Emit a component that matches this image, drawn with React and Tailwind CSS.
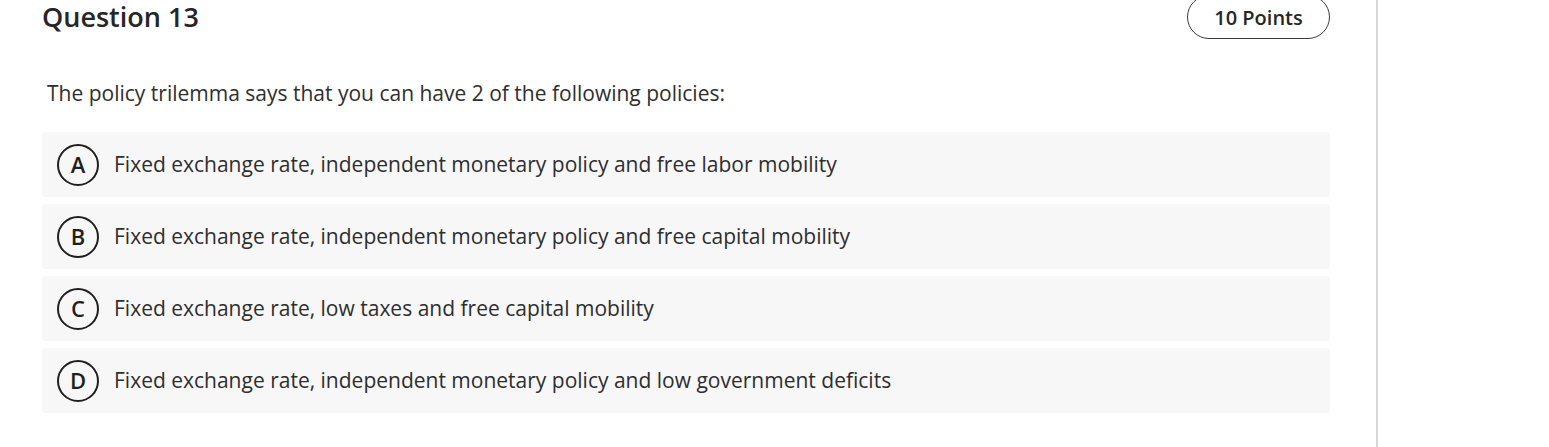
import React from 'react';

const options = [
  { letter: 'A', text: 'Fixed exchange rate, independent monetary policy and free labor mobility' },
  { letter: 'B', text: 'Fixed exchange rate, independent monetary policy and free capital mobility' },
  { letter: 'C', text: 'Fixed exchange rate, low taxes and free capital mobility' },
  { letter: 'D', text: 'Fixed exchange rate, independent monetary policy and low government deficits' },
];

const App = () => {
  return (
    <div className="flex h-[447px] w-full overflow-hidden bg-white font-['Open_Sans',sans-serif] text-[#2e2e2e]">
      <div className="w-[1378px] shrink-0 border-r-2 border-[#d6d6d6] pl-[42px] pr-[46px]">
        {/* header */}
        <div className="flex items-start justify-between">
          <h2 className="text-[27px] font-semibold leading-[34px] text-[#262626]">Question 13</h2>
          <div className="-mt-[5px] flex h-[44px] w-[143px] items-center justify-center rounded-full border-[1.5px] border-[#3a3a3a] pt-[1px] text-[20px] font-semibold text-[#262626]">
            10 Points
          </div>
        </div>

        <p className="mt-[40px] pl-[5px] text-[21px] leading-[28px]">
          The policy trilemma says that you can have 2 of the following policies:
        </p>

        <div className="mt-[25px] flex flex-col gap-[7px]">
          {options.map((o) => (
            <div key={o.letter} className="flex h-[65px] items-center rounded-[3px] bg-[#f7f7f7] pl-[15px]">
              <div className="flex h-[42px] w-[42px] shrink-0 items-center justify-center rounded-full border-2 border-[#1f1f1f] text-[22px] font-semibold text-[#1f1f1f]">
                {o.letter}
              </div>
              <span className="ml-[15px] text-[21px]">{o.text}</span>
            </div>
          ))}
        </div>
      </div>
      <div className="flex-1" />
    </div>
  );
};

export default App;
